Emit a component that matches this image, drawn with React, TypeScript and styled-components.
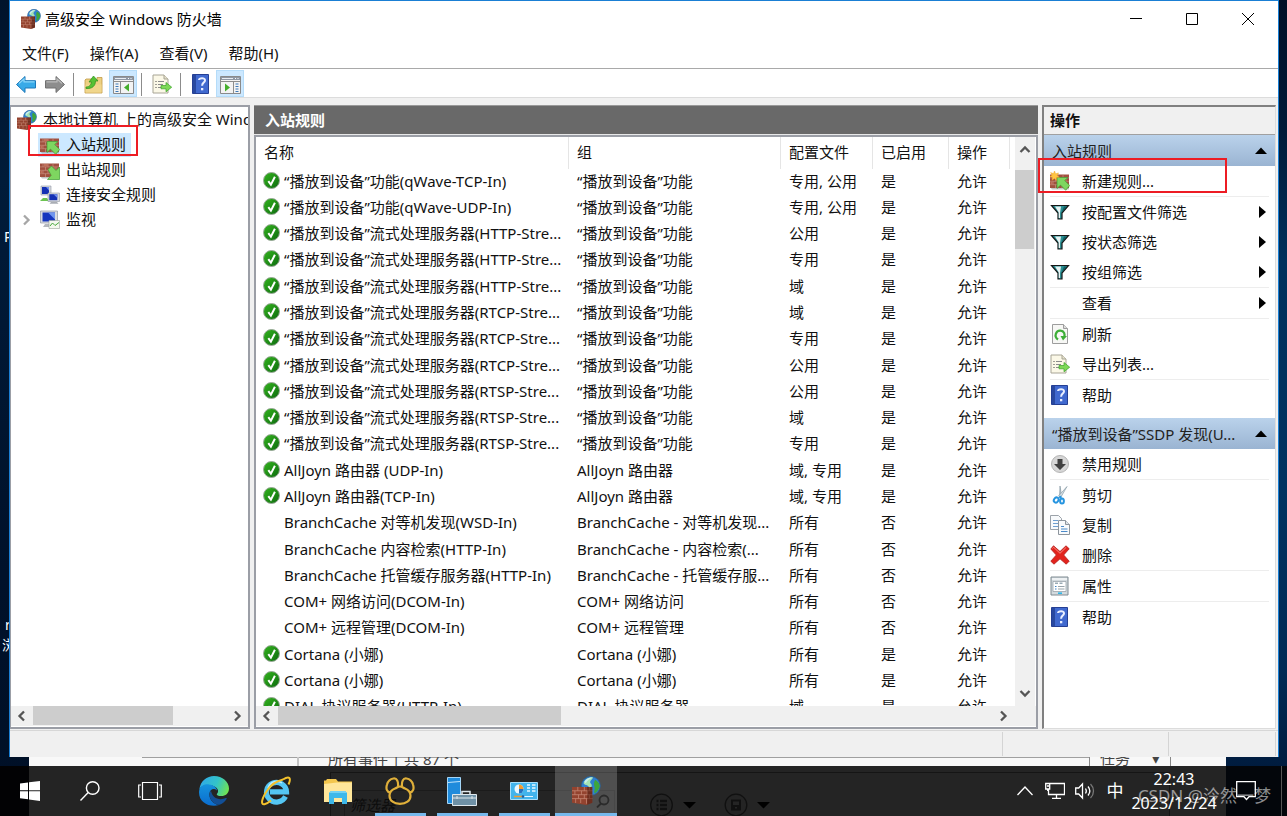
import React from "react";
import styled, { createGlobalStyle } from "styled-components";

const GlobalStyle = createGlobalStyle`
  *, *::before, *::after { box-sizing: border-box; }
  html, body { margin: 0; padding: 0; height: 100%; }
  body {
    font-family: "Noto Sans", "Noto Sans CJK SC", sans-serif;
    font-size: 15px;
    line-height: 20px;
    color: #111;
    overflow: hidden;
  }
  button { font: inherit; color: inherit; background: none; border: 0; padding: 0; margin: 0; text-align: left; }
  ul { list-style: none; margin: 0; padding: 0; }
  h1, h2 { font: inherit; margin: 0; }
  svg { display: block; flex: none; }
`;

/* ---------- layout ---------- */

const Desktop = styled.div`
  position: relative;
  height: 100vh;
  display: flex;
  flex-direction: column;
  background: linear-gradient(180deg, #001027 0, #001a38 16%, #00305c 32%, #003260 60%, #002a55 82%, #001c3f 94%) right / 62px 100% no-repeat,
    linear-gradient(180deg, #00132c 0, #001c3a 22%, #00112a 70%, #001027 100%);
`;

const DesktopLabel = styled.span<{ $top: number; $left: number }>`
  position: absolute;
  top: ${(p) => p.$top}px;
  left: ${(p) => p.$left}px;
  color: #fff;
  font-size: 14px;
`;

const Window = styled.main`
  position: relative;
  flex: 1;
  min-height: 0;
  margin: 0 8px 0 9px;
  display: flex;
  flex-direction: column;
  background: #f0f0f0;
  border: 1px solid #1a7fd4;
  border-bottom: 0;
`;

const TitleBar = styled.header`
  height: 36px;
  flex: none;
  display: flex;
  align-items: center;
  background: #fff;
  padding: 0 2px 0 11px;
  h1 { flex: 1; margin-left: 4px; color: #000; }
`;

const CaptionButton = styled.button`
  width: 56px;
  height: 36px;
  display: grid;
  place-items: center;
`;

const MenuBar = styled.nav`
  height: 32px;
  flex: none;
  display: flex;
  align-items: center;
  gap: 1px;
  padding-left: 2px;
  background: #fff;
  border-bottom: 1px solid #a9a9a9;
  button { padding: 0 10px; height: 28px; }
`;

const Toolbar = styled.div`
  height: 29px;
  flex: none;
  display: flex;
  gap: 1px;
  padding: 1px 0 0 2px;
  background: #fff;
  border-bottom: 1px solid #dcdcdc;
`;

const ToolButton = styled.button<{ $active?: boolean }>`
  width: 28px;
  height: 27px;
  display: grid;
  place-items: center;
  background: ${(p) => (p.$active ? "#cce8ff" : "transparent")};
  border: 1px solid ${(p) => (p.$active ? "#b5dcf9" : "transparent")};
`;

const ToolDivider = styled.span`
  width: 1px;
  margin: 3px 5px 1px 3px;
  background: #8c8c8c;
`;

const Panels = styled.div`
  flex: 1;
  min-height: 0;
  display: grid;
  grid-template-columns: 240px minmax(0, 1fr) 234px;
  gap: 4px;
  padding: 7px 2px 1px 0;
`;

const TreePanel = styled.nav`
  display: flex;
  flex-direction: column;
  min-height: 0;
  background: #fff;
  border: 2px solid #9b9ea6;
  border-left-width: 1px;
`;

const TreeList = styled.ul`
  flex: 1;
  min-height: 0;
`;

const TreeItem = styled.li<{ $level: number }>`
  position: relative;
  display: flex;
  align-items: center;
  height: 25px;
  padding-left: ${(p) => (p.$level ? 27 : 4)}px;
`;

const TreeButton = styled.button<{ $selected?: boolean }>`
  display: flex;
  align-items: center;
  gap: 6px;
  height: 24px;
  padding: 0 5px 0 2px;
  min-width: 0;
  overflow: hidden;
  white-space: nowrap;
  background: ${(p) => (p.$selected ? "#cce8ff" : "transparent")};
`;

const Label = styled.span`
  padding-bottom: 1px;
`;

const Expander = styled.span`
  position: absolute;
  left: 9px;
  top: 7px;
`;

const TreeMark = styled.span`
  position: absolute;
  left: 17px;
  top: -7px;
  width: 110px;
  height: 31px;
  border: 2px solid #ed1c24;
  pointer-events: none;
`;

const ActionMark = styled.span`
  position: absolute;
  left: -12px;
  right: 42px;
  top: -8px;
  height: 35px;
  border: 2px solid #ed1c24;
  pointer-events: none;
`;

const RulesPanel = styled.section`
  display: flex;
  flex-direction: column;
  min-width: 0;
  min-height: 0;
`;

const RulesTitle = styled.h2`
  height: 30px;
  flex: none;
  padding: 4px 11px;
  background: #696969;
  border-top: 1px solid #999;
  border-bottom: 1px solid #e8e8e8;
  color: #fff;
  font-weight: 700;
`;

const RulesBody = styled.div`
  flex: 1;
  min-height: 0;
  display: flex;
  flex-direction: column;
  background: #fff;
  border: 2px solid #9b9ea6;
`;

const RulesView = styled.div`
  flex: 1;
  min-height: 0;
  display: flex;
`;

const TableClip = styled.div`
  flex: 1;
  min-width: 0;
  overflow: hidden;
`;

const RuleTable = styled.table`
  width: 754px;
  height: 584px;
  table-layout: fixed;
  border-collapse: separate;
  border-spacing: 0;
  th, td {
    padding: 0 0 3px 8px;
    text-align: left;
    white-space: nowrap;
    overflow: hidden;
    font-weight: 400;
  }
  th { height: 32px; border-right: 1px solid #e5e5e5; }
  td:first-child { padding-left: 7px; }
`;

const RuleName = styled.span`
  display: flex;
  align-items: center;
  gap: 3px;
`;

const IconSlot = styled.span`
  width: 18px;
  flex: none;
`;

const ScrollTrack = styled.div<{ $vertical?: boolean; $inset?: boolean }>`
  flex: none;
  display: flex;
  flex-direction: ${(p) => (p.$vertical ? "column" : "row")};
  ${(p) => (p.$vertical ? "width: 20px;" : "height: 20px;")}
  margin: 0 ${(p) => (p.$vertical ? 1 : 0)}px ${(p) => (p.$vertical ? 0 : 1)}px 0;
  background: #f0f0f0;
  padding-right: ${(p) => (p.$inset ? 22 : 0)}px;
`;

const ScrollButton = styled.button<{ $vertical?: boolean }>`
  flex: none;
  width: ${(p) => (p.$vertical ? 20 : 22)}px;
  height: ${(p) => (p.$vertical ? 26 : 20)}px;
  display: grid;
  place-items: center;
`;

const ScrollRail = styled.div`
  flex: 1;
  min-height: 0;
  min-width: 0;
`;

const Thumb = styled.div<{ $length: number; $vertical?: boolean }>`
  background: #cdcdcd;
  width: ${(p) => (p.$vertical ? 19 : p.$length)}px;
  height: ${(p) => (p.$vertical ? p.$length : 19)}px;
  ${(p) => p.$vertical && "margin-top: 7px;"}
`;

const ActionPanel = styled.aside`
  display: flex;
  flex-direction: column;
  min-height: 0;
  background: #fff;
  border: 2px solid #808080;
  border-right: 1px solid #dcdcdc;
  border-bottom: 1px solid #dcdcdc;
`;

const PanelTitle = styled.h2`
  height: 28px;
  padding: 3px 6px;
  background: #f0f0f0;
  border-bottom: 1px solid #a0a0a0;
  font-weight: 700;
`;

const SectionHeader = styled.button`
  display: flex;
  align-items: center;
  justify-content: space-between;
  width: 100%;
  height: 31px;
  padding: 0 8px;
  background: linear-gradient(180deg, #bad2eb, #9ab4d2);
  color: #222;
`;

const ActionSection = styled.section`
  margin-bottom: 8px;
`;

const ActionItem = styled.li<{ $divided?: boolean }>`
  position: relative;
  margin: 0 6px;
  border-bottom: ${(p) => (p.$divided ? "1px solid #ededed" : "0")};
`;

const ActionButton = styled.button`
  display: flex;
  align-items: center;
  width: 100%;
  height: 30px;
  padding-right: 3px;
`;

const ActionIcon = styled.span`
  width: 20px;
  height: 20px;
  margin-right: 12px;
`;

const ActionText = styled.span`
  flex: 1;
`;

const StatusBar = styled.footer`
  height: 27px;
  flex: none;
  display: flex;
  border-top: 1px solid #d7d7d7;
  padding: 1px 2px 1px 0;
`;

const StatusCell = styled.span<{ $width?: number }>`
  flex: ${(p) => (p.$width ? `0 0 ${p.$width}px` : "1")};
  border-right: 1px solid #d4d4d4;
`;

/* The strip of the application that is open behind the window. */
const BackWindow = styled.div`
  position: relative;
  height: 9px;
  flex: none;
  display: flex;
  align-items: flex-end;
  overflow: hidden;
  margin: 0 61px 0 29px;
  background: #f8f8f8;
  color: #444;
`;

const BackPane = styled.span<{ $width: number }>`
  width: ${(p) => p.$width}px;
  height: 9px;
  flex: none;
  border-right: 2px solid #c4c4c4;
  background: linear-gradient(#a0a0a0, #a0a0a0) right top / 155px 1px no-repeat;
`;

const BackText = styled.span`
  flex: 1;
  height: 9px;
  padding-left: 29px;
  border-top: 1px solid #a0a0a0;
  line-height: 2px;
`;

const BackCombo = styled.span`
  width: 82px;
  height: 9px;
  margin-right: 55px;
  padding: 0 10px;
  display: flex;
  justify-content: space-between;
  border: solid #888;
  border-width: 0 1px;
  line-height: 2px;
`;

/* ---------- taskbar ---------- */

const Taskbar = styled.footer`
  position: relative;
  height: 50px;
  flex: none;
  display: flex;
  background: linear-gradient(90deg, #020204 29px, #242424 29px, #242424 calc(100% - 61px), #03060b calc(100% - 61px));
  color: #fff;
`;

const TaskGroup = styled.div`
  position: relative;
  display: flex;
  margin-right: 3px;
`;

const TaskButton = styled.button<{ $wide?: boolean; $active?: boolean }>`
  width: ${(p) => (p.$wide ? 62 : 60)}px;
  display: grid;
  place-items: center;
`;

const RunningButton = styled(TaskButton)`
  background: ${(p) => (p.$active ? "rgba(255,255,255,.2)" : "transparent")}
    linear-gradient(#76b9ed, #76b9ed) bottom / ${(p) => (p.$active ? "100%" : "51px")} 3px no-repeat;
`;

const Tray = styled.div`
  margin-left: auto;
  position: relative;
  display: flex;
  padding-right: 5px;
`;

const TrayButton = styled.button<{ $width?: number }>`
  width: ${(p) => p.$width ?? 30}px;
  display: grid;
  place-items: center;
  font-size: 17px;
`;

const Clock = styled.button`
  width: 96px;
  padding-right: 8px;
  text-align: center;
  font-size: 16px;
  line-height: 24px;
  time { display: block; }
`;

const ShowDesktop = styled.span`
  width: 1px;
  margin-left: 15px;
  background: #555;
`;

const Watermark = styled.span`
  position: absolute;
  right: 16px;
  top: 19px;
  font-size: 17px;
  line-height: 22px;
  white-space: nowrap;
  color: rgba(255, 255, 255, 0.55);
  pointer-events: none;
`;

const Ghost = styled.div`
  position: absolute;
  inset: 6px 117px 0 330px;
  border: 1px solid #151515;
  border-bottom: 0;
  pointer-events: none;
  color: #0c0c0c;
`;

const GhostFilter = styled.div`
  position: absolute;
  left: 13px;
  top: 17px;
  width: 271px;
  height: 30px;
  padding: 4px 5px;
  border: 1px solid #1b1b1b;
  border-bottom: 0;
  font-style: italic;
`;

const GhostTools = styled.div`
  position: absolute;
  left: 319px;
  top: 20px;
`;

/* ---------- icons ---------- */

const Globe = () => (
  <g>
    <circle cx="13" cy="6.800" r="6.500" fill="#2f7fd0" stroke="#2a6296" strokeWidth=".6" />
    <path d="M8 5C9 2 12 .6 14.500 1c-.4 1.600-1.800 1.600-2 3-.2 1.500 1.800 1.600 1 3.200-.6 1.200-2 .6-2.600-.4C10.300 6 9 6.500 8 5z" fill="#a5e3b4" />
    <path d="M16 2.500c2 1.200 3.200 2.800 3.200 4.800-.8 2.700-2.400 4.200-3.700 4.700-.6-1.600.5-2.700.1-4.200-.3-1.500-.9-3.200.4-5.300z" fill="#3da63c" />
    <path d="M8.500 4C10 1.500 12 .8 14 1c-1.500 1-3.500 2-4.500 4z" fill="#d3f0fb" opacity=".8" />
  </g>
);

const Wall = () => (
  <g>
    <path d="M0 7.500h14v11L10 20 0 18.500z" fill="#93432f" />
    <path d="M0 10.200h14M0 12.900h14M0 15.600h14M4 7.500v2.700M8.500 7.500v2.700M12 7.500v2.700M2 10.200v2.700M6.500 10.200v2.700M10.500 10.200v2.700M4.500 12.900v2.700M8.500 12.900v2.700M12 12.900v2.700M2.500 15.600v3M6 15.600v3M10 15.600v3.500" stroke="#c98c79" strokeWidth=".5" />
    <path d="M10.500 7.500H14v11l-3.500 1.300z" fill="#4e1c10" opacity=".55" />
  </g>
);

const FirewallIcon = ({ size = 20 }: { size?: number }) => (
  <svg width={size} height={size} viewBox="0 0 20 20">
    <Globe />
    <Wall />
  </svg>
);

const RuleIcon = ({ out, isNew }: { out?: boolean; isNew?: boolean }) => (
  <svg width="20" height="20" viewBox="0 0 20 20">
    <path d="M0 16h19v2.500H2z" fill="#7d7d7d" opacity=".45" />
    <path d="M0 3.500h19V17H0z" fill="#a1503f" />
    <path d="M0 6.900h19M0 10.300h19M0 13.700h19M3 3.500v3.400M8 3.500v3.400M13 3.500v3.400M5.500 6.900v3.400M10.500 6.900v3.400M16 6.900v3.400M3 10.300v3.400M8 10.300v3.400M5.500 13.700V17M12 13.700V17" stroke="#cf998a" strokeWidth=".6" />
    <path d="M4 4h4v2.500H4zM11 7.300h4.500v2.600H11zM.5 10.700h2v2.600h-2z" fill="#c0705c" />
    {out ? (
      <path d="M8 9.500l3.500-3.500 4.500 4.500L19.500 7v12.500H7.500l3.700-4.200z" fill="#7ed660" stroke="#3d9c33" strokeWidth=".7" />
    ) : (
      <path d="M7 6.500h11l-3.300 3 5 5-4 4.800-5.200-5.200L7 17.500z" fill="#7ed660" stroke="#3d9c33" strokeWidth=".7" />
    )}
    {isNew && (
      <path d="M4.500-.2l1.100 3 3-.9-1.500 2.600 2.400 1.800-3.100.3.200 3.100-2.100-2.200L2 9.300l.3-3L-.4 5.600l2.500-1.500L.6 1.600l2.900 1z" fill="#ffc543" stroke="#ed9d20" strokeWidth=".4" />
    )}
  </svg>
);

const ConnectionIcon = () => (
  <svg width="20" height="20" viewBox="0 0 20 20">
    <path d="M1 1h10v9H1z" fill="#d7d9dd" stroke="#9298a4" strokeWidth=".6" />
    <path d="M2 2h7v7H2z" fill="#1430b4" />
    <path d="M6 2h3v3.500z" fill="#6f8eed" />
    <path d="M0 16l3-3h4l2 3z" fill="#6cc451" />
    <path d="M8 8h11.500v8.500H8z" fill="#d7d9dd" stroke="#9298a4" strokeWidth=".6" />
    <path d="M9.300 9.200h8v6h-8z" fill="#1430b4" />
    <path d="M13.500 9.200h3.800V13z" fill="#6f8eed" />
    <path d="M11 17h6l1.500 1.800H9.500z" fill="#a9adb4" />
  </svg>
);

const MonitorIcon = () => (
  <svg width="20" height="20" viewBox="0 0 20 20">
    <path d="M.5 1h17v12H.5z" fill="#d9dbe0" stroke="#9298a4" strokeWidth=".7" />
    <path d="M2.500 2.500h12.500v9H2.500z" fill="#1636be" />
    <path d="M8 2.500h7v7z" fill="#6f95ee" />
    <path d="M5 14h7l1 3H3z" fill="#b5b8be" />
    <path d="M9 10.500h10.500v8H9z" fill="#f4f8ef" stroke="#9aa39a" strokeWidth=".6" />
    <path d="M10 16l2.500-3 2.500 2.500 4-3" fill="none" stroke="#48a83c" strokeWidth="1" />
  </svg>
);

const ArrowIcon = ({ back }: { back?: boolean }) => (
  <svg width="20" height="20" viewBox="0 0 20 20">
    <path
      d={back ? "M.5 10.500l8.500-8v4.200h10.500v7.300H9v4.500z" : "M19.500 10.500l-8.500-8v4.200H.5v7.300H11v4.500z"}
      fill={back ? "#38aae8" : "#8d8d8d"}
      stroke={back ? "#1d78b9" : "#707070"}
      strokeLinejoin="round"
    />
    <path d={back ? "M3 9.500l5-4.500v2.800h10.500" : "M1.500 7.800H12V5l5 4.500"} fill="none" stroke={back ? "#8bd5f8" : "#bcbcbc"} strokeWidth="1.200" />
  </svg>
);

const FolderUpIcon = () => (
  <svg width="20" height="20" viewBox="0 0 20 20">
    <path d="M1 6l1-1h6l2 1h3V3.500h5V19H1z" fill="#ecd082" stroke="#c19a45" strokeWidth=".8" />
    <path d="M1.500 10.500h16v8h-16z" fill="#f0d68c" />
    <path d="M2 13c3.500 0 5-2 5.500-5H5l4.500-6L14 7h-2.500c0 5-3.500 8-9.500 7.500z" fill="#55c134" stroke="#2e8f1d" strokeWidth=".7" />
  </svg>
);

const PaneIcon = ({ right }: { right?: boolean }) => (
  <svg width="21" height="20" viewBox="0 0 21 20">
    <path d="M.5 2.500h20v17H.5z" fill="#f3f3f3" stroke="#8a8a8a" />
    <path d="M1 3h19v3H1z" fill="#8f98a5" />
    <path d="M2 4.500h11" stroke="#e9edf2" />
    <path d="M15 4h1v1h-1zM17.500 4h1v1h-1z" fill="#fff" />
    <path d="M1 7.500h19" stroke="#8c8c8c" />
    <path d={right ? "M13.500 8v11" : "M7.500 8v11"} stroke="#8c8c8c" />
    <path d={right ? "M15.500 10h3M15.500 12.500h3M15.500 15h3M15.500 17.500h3" : "M2.500 10h3M2.500 12.500h3M2.500 15h3M2.500 17.500h3"} stroke="#3c79b8" />
    <path d={right ? "M5 9.500l5 4-5 4z" : "M16 9.500l-5 4 5 4z"} fill="#44ae2b" />
  </svg>
);

const ExportIcon = () => (
  <svg width="20" height="20" viewBox="0 0 20 20">
    <path d="M1 1h11l4 4v14H1z" fill="#fbf8e7" stroke="#a7a495" />
    <path d="M12 1v4h4" fill="#e6e2cc" stroke="#a7a495" />
    <path d="M6 7.500h6M6 10.500h5M6 13.500h4" stroke="#8b8b8b" />
    <path d="M3.500 7.500h1M3.500 10.500h1M3.500 13.500h1" stroke="#444" />
    <path d="M9 11.500h5v-3l5.700 4.700-5.700 4.600v-3H9z" fill="#7ed957" stroke="#37a226" strokeWidth=".7" />
  </svg>
);

const HelpIcon = () => (
  <svg width="20" height="20" viewBox="0 0 20 20">
    <path d="M1.500.5h16v19h-16z" fill="#4069cf" stroke="#253f94" />
    <path d="M2 1h3v18H2z" fill="#2848a0" />
    <path d="M8 6c.3-2.400 6.200-2.600 6 .4-.1 2.200-2.900 2.300-2.900 5.300" fill="none" stroke="#e9efff" strokeWidth="2" />
    <path d="M10 14h2.300v2.300H10z" fill="#e9efff" />
  </svg>
);

const CheckIcon = () => (
  <svg width="18" height="18" viewBox="0 0 18 18">
    <defs>
      <linearGradient id="tick" x1="0" y1="0" x2="1" y2="1">
        <stop offset="0" stopColor="#35b51f" />
        <stop offset="1" stopColor="#0c6a0e" />
      </linearGradient>
    </defs>
    <circle cx="8.500" cy="8.500" r="8" fill="url(#tick)" stroke="#9aa899" />
    <path d="M5.300 9.200l2.600 3.500 4-8" fill="none" stroke="#fff" strokeWidth="2" />
  </svg>
);

const FunnelIcon = () => (
  <svg width="20" height="20" viewBox="0 0 20 20">
    <path d="M1.500 3.500h17l-6.500 7.500v6h-4v-6z" fill="#2b8f92" stroke="#161616" strokeWidth="1.200" />
    <path d="M5 4.500h6l-1 6.500v5H8.700v-5.400z" fill="#e8f3f3" />
    <path d="M14 4.500h3l-5.500 6z" fill="#0e5f63" />
  </svg>
);

const RefreshIcon = () => (
  <svg width="20" height="20" viewBox="0 0 20 20">
    <path d="M2.500.5h11l4 4v15h-15z" fill="#f7f7f5" stroke="#9d9d9d" />
    <path d="M13.500.5v4h4" fill="#ddd" stroke="#9d9d9d" />
    <path d="M8 15.500c-4.500-3-2-9 2.300-8.800 4 .2 5 3.800 3.800 6.300" fill="none" stroke="#3eae38" strokeWidth="2.200" />
    <path d="M10.500 12h6.500l-4 4.600z" fill="#3eae38" />
  </svg>
);

const DisableIcon = () => (
  <svg width="20" height="20" viewBox="0 0 20 20">
    <circle cx="10" cy="10" r="8.500" fill="#d6d6d6" stroke="#b5b5b5" />
    <path d="M7.500 5h5v5H16l-6 6-6-6h3.500z" fill="#404040" />
  </svg>
);

const CutIcon = () => (
  <svg width="20" height="20" viewBox="0 0 20 20">
    <path d="M10 1l1.500 9-2 2z" fill="#b9c6cf" stroke="#7a909c" strokeWidth=".6" />
    <path d="M17 1.500L11 12 8.500 11z" fill="#d7e0e6" stroke="#7a909c" strokeWidth=".6" />
    <ellipse cx="6.200" cy="15" rx="2.200" ry="2.700" transform="rotate(35 6.200 15)" fill="none" stroke="#2795e0" strokeWidth="2" />
    <ellipse cx="12" cy="16" rx="1.900" ry="2.500" fill="none" stroke="#2795e0" strokeWidth="2" />
    <path d="M8 12.500l3-2 1 3z" fill="#2795e0" />
  </svg>
);

const CopyIcon = () => (
  <svg width="20" height="20" viewBox="0 0 20 20">
    <path d="M.5.5h8l3 3v11H.5z" fill="#f8fafc" stroke="#9ca3aa" />
    <path d="M3 5.500h5M3 8.500h5M3 11.500h5" stroke="#6f9fd0" />
    <path d="M8.500 5.500h7l4 4v10h-11z" fill="#f8fafc" stroke="#8d959d" />
    <path d="M15.500 5.500v4h4" fill="#dde3e9" stroke="#8d959d" />
    <path d="M11 11.500h3M11 14h6.500M11 16.500h6.500" stroke="#4a8ac9" />
  </svg>
);

const DeleteIcon = () => (
  <svg width="20" height="20" viewBox="0 0 20 20">
    <path d="M3.500.8L10 6.500 16 .8l3.200 3-5.500 6.200 5.500 6.200-3 3L10 13.800 4 19.200l-3.200-3L6.300 10 .8 4z" fill="#e2231d" stroke="#b3201c" strokeWidth=".8" strokeLinejoin="round" />
    <path d="M2.500 3.500l1.200-1.200L10 8.300l6.200-6" fill="none" stroke="#f98a80" />
  </svg>
);

const PropertiesIcon = () => (
  <svg width="20" height="20" viewBox="0 0 20 20">
    <path d="M1 1h17v18H1z" fill="#d3dade" stroke="#7f8a91" />
    <path d="M2 2h15v2H2z" fill="#eef1f3" />
    <path d="M3 5.500h13v10H3z" fill="#fff" stroke="#9aa5ac" strokeWidth=".8" />
    <path d="M5 6.500h3v1.500H5zM9.500 6.500h3v1.500h-3z" fill="#9aabb6" />
    <path d="M5 10.500h1.500M5 13h1.500" stroke="#3c82c4" />
    <path d="M8 10.500h6.500M8 13h6.500" stroke="#98a4ab" />
    <path d="M8 17.200h4" stroke="#27b5e8" strokeWidth="1.500" />
  </svg>
);

const Triangle = ({ up }: { up?: boolean }) => (
  <svg width={up ? 12 : 7} height={up ? 7 : 12} viewBox={up ? "0 0 12 7" : "0 0 7 12"}>
    <path d={up ? "M0 7l6-6.500L12 7z" : "M0 0l7 6-7 6z"} fill="#000" />
  </svg>
);

const Caret = ({ turn = 0, color = "#555" }: { turn?: number; color?: string }) => (
  <svg width="12" height="12" viewBox="0 0 12 12">
    <path d="M1.500 8L6 3.500 10.500 8" transform={`rotate(${turn} 6 6)`} fill="none" stroke={color} strokeWidth="2.300" />
  </svg>
);

const StartIcon = () => (
  <svg width="20" height="20" viewBox="0 0 20 20">
    <path d="M0 2.500l8-1v7.700H0zM9 1.300L20 0v9.200H9zM0 10.200h8v8L0 17.200zM9 10.200h11V20L9 18.400z" fill="#fff" />
  </svg>
);

const SearchIcon = () => (
  <svg width="20" height="20" viewBox="0 0 20 20" fill="none" stroke="#fff" strokeWidth="1.400">
    <circle cx="12.700" cy="7" r="6.300" />
    <path d="M8.200 11.500L.5 19.500" />
  </svg>
);

const TaskViewIcon = () => (
  <svg width="24" height="20" viewBox="0 0 24 20" fill="none" stroke="#fff" strokeWidth="1.200">
    <path d="M4.500 1.500h15v17h-15zM3 4H.7v12H3M21 4h2.300v12H21" />
  </svg>
);

const EdgeIcon = () => (
  <svg width="30" height="30" viewBox="0 0 30 30">
    <defs>
      <linearGradient id="edgeTop" x1="0" y1=".3" x2="1" y2=".6">
        <stop offset="0" stopColor="#2fa9e8" />
        <stop offset=".55" stopColor="#33c3c9" />
        <stop offset="1" stopColor="#6fe354" />
      </linearGradient>
      <linearGradient id="edgeLow" x1="0" y1="0" x2="0" y2="1">
        <stop offset="0" stopColor="#1593dd" />
        <stop offset="1" stopColor="#0b6cce" />
      </linearGradient>
    </defs>
    <path d="M.4 13C1.500 5 8 0 15 0c8.500 0 15 6 15 12.500 0 5-3.700 7.500-7.500 7.500-4 0-5.500-1.300-4.300-2.600 1.800-2 .8-5.400-2.700-7C10 8 3 9 .4 13z" fill="url(#edgeTop)" />
    <path d="M.2 14.500C1 9.500 6 8 10 8.400c4 .3 7.500 2.600 8 6-3.500-3-7.300-.5-7.600 3.300-.4 5.500 4 10.500 9.600 11.300C10 32-1.500 25.500.2 14.500z" fill="url(#edgeLow)" />
    <path d="M12 14.500c-4.500 6.500 2.500 14.500 8.500 14.300 3.200-1 6-3.500 7.200-6 .3-.7-.2-1-.8-.7C20 25 13 22 12 14.500z" fill="#124f96" />
  </svg>
);

const ExplorerBrowserIcon = () => (
  <svg width="30" height="30" viewBox="0 0 30 30" fill="none">
    <path d="M24.500 20.500A10 9.800 0 1 1 25.500 15.800H9" stroke="#54c6f3" strokeWidth="5.200" />
    <path d="M7 12c2-6 9-9 14-5" stroke="#b9ecff" strokeWidth="1.500" />
    <path d="M22 3.500c6.500-4 8.500-1.500 5.500 5M6.500 14C.8 22-.8 29 3.500 28.300c2-.4 4.500-2 6.500-3.700M6.500 14C11 7.500 16 5 22 3.500" stroke="#f4c22c" strokeWidth="2" />
  </svg>
);

const FolderIcon = () => (
  <svg width="28" height="25" viewBox="0 0 28 25">
    <path d="M0 1.500h2L3 0h9l2 2.500h14V23H0z" fill="#f3c64d" />
    <path d="M0 5l13-1.500h15V23H0z" fill="#ffe69a" />
    <path d="M5 25V14l2-2h14l2 2v11h-5v-6h-8v6z" fill="#3db8ea" />
    <path d="M5 14l2-2h14l2 2z" fill="#73d2f4" />
  </svg>
);

const NavicatIcon = () => (
  <svg width="30" height="28" viewBox="0 0 30 28" fill="none" stroke="#e0b03a" strokeWidth="2.200">
    <path d="M15 9.500c2 0 3 1.300 5 2 3 1.200 5.500 3.800 5.500 7.300 0 5-4.500 8-10.500 8s-10.500-3-10.500-8c0-3.500 2.500-6.100 5.500-7.300 2-.7 3-2 5-2z" />
    <path d="M5.500 15.500C1.500 15 .8 11.500 2 7.500 2.800 4.500 5.500 2 8.500 1.500c3.500-.5 5 3 4.500 8M24.500 15.500c4-.5 4.700-4 3.500-8-.8-3-3.500-5.500-6.500-6-3.500-.5-5 3-4.500 8" />
  </svg>
);

const ServerIcon = () => (
  <svg width="30" height="29" viewBox="0 0 30 29">
    <path d="M.5.5h13v26H.5z" fill="#1f8bdc" stroke="#a4d5f6" />
    <path d="M1 5l12-1v1L1 6z" fill="#bfe3fb" />
    <path d="M15 17v-2.500h8V17" fill="none" stroke="#dfe8ed" strokeWidth="1.500" />
    <path d="M5.500 17.500h24v11h-24z" fill="#6f91a6" stroke="#dfe8ed" />
    <path d="M6 21h23M10 19v3M25 19v3" stroke="#dfe8ed" />
  </svg>
);

const ControlPanelIcon = () => (
  <svg width="28" height="18" viewBox="0 0 28 18">
    <path d="M.5.500h27v17H.500z" fill="#42b4ec" stroke="#a6defa" />
    <circle cx="9" cy="7" r="4.500" fill="#e9f7ff" />
    <path d="M9 7V2.500A4.500 4.500 0 0 1 13.500 7z" fill="#f49b2c" />
    <path d="M9 7h4.500A4.500 4.500 0 0 1 9 11.500z" fill="#2670be" />
    <path d="M17 3h3M17 6h3M17 9h3M22 3h3.500M22 6h3.500M22 9h3.500" stroke="#e9f7ff" strokeWidth="1.500" />
    <path d="M4 14.500h9" stroke="#f49b2c" strokeWidth="1.500" />
    <path d="M14 14.500h9" stroke="#e9f7ff" />
    <circle cx="13" cy="14.500" r="1.300" fill="#1e5c9d" />
  </svg>
);

const TrayIcon = ({ name }: { name: "up" | "network" | "volume" | "notice" }) => (
  <svg width="20" height="20" viewBox="0 0 20 20" fill="none" stroke="#fff" strokeWidth="1.300">
    {name === "up" && <path d="M2.500 14L10 6l7.500 8" />}
    {name === "network" && <path d="M5 2.500h14.500v11H3.500V8.500M.7 2.500h4v5.500h-4zM2.700 8v2M2 5h2M7 17.300h9M11.500 13.500v3.500" />}
    {name === "volume" && (
      <>
        <path d="M.7 7h3L7.500 3v14l-3.800-4h-3zM10.500 7.500c1 1.500 1 3.500 0 5M13 5.500c2.200 2.700 2.200 6.300 0 9" />
        <path d="M15.500 3c4 4 4 10 0 14" stroke="#777" />
      </>
    )}
    {name === "notice" && <path d="M.7.700h18.600v15H13L10.500 18.500 8 15.700H.7z" />}
  </svg>
);

const GhostToolsIcon = () => (
  <svg width="124" height="24" viewBox="0 0 124 24" fill="none" stroke="#101010" strokeWidth="1.300">
    <circle cx="11.500" cy="12" r="10.800" />
    <path d="M6.500 8h2M10 8h7M6.500 12h2M10 12h7M6.500 16h2M10 16h7" strokeWidth="2.400" />
    <path d="M33 9h13l-6.500 6.500zM107 9h13l-6.500 6.500z" fill="#000" stroke="none" />
    <circle cx="86" cy="12" r="10.800" />
    <path d="M82 7.500h8v9h-8zM84 13h4v3.500h-4z" strokeWidth="2" />
  </svg>
);

/* ---------- data ---------- */

type Rule = [name: string, group: string, profile: string, enabled: boolean];

const CAST = "“播放到设备”功能";
const stream = (kind: string, profile: string): Rule => [`“播放到设备”流式处理服务器(${kind}-Stre...`, CAST, profile, true];

const RULES: Rule[] = [
  ["“播放到设备”功能(qWave-TCP-In)", CAST, "专用, 公用", true],
  ["“播放到设备”功能(qWave-UDP-In)", CAST, "专用, 公用", true],
  stream("HTTP", "公用"),
  stream("HTTP", "专用"),
  stream("HTTP", "域"),
  stream("RTCP", "域"),
  stream("RTCP", "专用"),
  stream("RTCP", "公用"),
  stream("RTSP", "公用"),
  stream("RTSP", "域"),
  stream("RTSP", "专用"),
  ["AllJoyn 路由器 (UDP-In)", "AllJoyn 路由器", "域, 专用", true],
  ["AllJoyn 路由器(TCP-In)", "AllJoyn 路由器", "域, 专用", true],
  ["BranchCache 对等机发现(WSD-In)", "BranchCache - 对等机发现...", "所有", false],
  ["BranchCache 内容检索(HTTP-In)", "BranchCache - 内容检索(...", "所有", false],
  ["BranchCache 托管缓存服务器(HTTP-In)", "BranchCache - 托管缓存服...", "所有", false],
  ["COM+ 网络访问(DCOM-In)", "COM+ 网络访问", "所有", false],
  ["COM+ 远程管理(DCOM-In)", "COM+ 远程管理", "所有", false],
  ["Cortana (小娜)", "Cortana (小娜)", "所有", true],
  ["Cortana (小娜)", "Cortana (小娜)", "所有", true],
  ["DIAL 协议服务器(HTTP-In)", "DIAL 协议服务器", "域", true],
];

type Action = { label: string; icon?: React.ReactNode; submenu?: boolean; divided?: boolean; marked?: boolean };

const SECTIONS: { title: string; items: Action[] }[] = [
  {
    title: "入站规则",
    items: [
      { label: "新建规则...", icon: <RuleIcon isNew />, divided: true, marked: true },
      { label: "按配置文件筛选", icon: <FunnelIcon />, submenu: true },
      { label: "按状态筛选", icon: <FunnelIcon />, submenu: true },
      { label: "按组筛选", icon: <FunnelIcon />, submenu: true, divided: true },
      { label: "查看", submenu: true, divided: true },
      { label: "刷新", icon: <RefreshIcon /> },
      { label: "导出列表...", icon: <ExportIcon />, divided: true },
      { label: "帮助", icon: <HelpIcon /> },
    ],
  },
  {
    title: "“播放到设备”SSDP 发现(U...",
    items: [
      { label: "禁用规则", icon: <DisableIcon />, divided: true },
      { label: "剪切", icon: <CutIcon /> },
      { label: "复制", icon: <CopyIcon /> },
      { label: "删除", icon: <DeleteIcon />, divided: true },
      { label: "属性", icon: <PropertiesIcon />, divided: true },
      { label: "帮助", icon: <HelpIcon /> },
    ],
  },
];

const TREE: { label: string; icon: React.ReactNode; level: number; selected?: boolean; expandable?: boolean }[] = [
  { label: "本地计算机 上的高级安全 Windows 防火墙", icon: <FirewallIcon />, level: 0 },
  { label: "入站规则", icon: <RuleIcon />, level: 1, selected: true },
  { label: "出站规则", icon: <RuleIcon out />, level: 1 },
  { label: "连接安全规则", icon: <ConnectionIcon />, level: 1 },
  { label: "监视", icon: <MonitorIcon />, level: 1, expandable: true },
];

/* ---------- page ---------- */

export default function App() {
  return (
    <>
      <GlobalStyle />
      <Desktop>
        <DesktopLabel $top={227} $left={4}>P</DesktopLabel>
        <DesktopLabel $top={615} $left={5}>r</DesktopLabel>
        <DesktopLabel $top={635} $left={2}>浏</DesktopLabel>

        <Window>
          <TitleBar>
            <FirewallIcon />
            <h1>高级安全 Windows 防火墙</h1>
            <CaptionButton aria-label="最小化">
              <svg width="12" height="12" viewBox="0 0 12 12"><path d="M0 5.500h12" stroke="#000" /></svg>
            </CaptionButton>
            <CaptionButton aria-label="最大化">
              <svg width="12" height="12" viewBox="0 0 12 12"><path d="M.5.500h11v11H.500z" fill="none" stroke="#000" /></svg>
            </CaptionButton>
            <CaptionButton aria-label="关闭">
              <svg width="12" height="12" viewBox="0 0 12 12"><path d="M0 0l12 12M12 0L0 12" stroke="#000" /></svg>
            </CaptionButton>
          </TitleBar>

          <MenuBar>
            {["文件(F)", "操作(A)", "查看(V)", "帮助(H)"].map((m) => (
              <button key={m}>{m}</button>
            ))}
          </MenuBar>

          <Toolbar>
            <ToolButton aria-label="后退"><ArrowIcon back /></ToolButton>
            <ToolButton aria-label="前进"><ArrowIcon /></ToolButton>
            <ToolDivider />
            <ToolButton aria-label="上一级"><FolderUpIcon /></ToolButton>
            <ToolButton $active aria-label="控制台树"><PaneIcon /></ToolButton>
            <ToolDivider />
            <ToolButton aria-label="导出列表"><ExportIcon /></ToolButton>
            <ToolDivider />
            <ToolButton aria-label="帮助"><HelpIcon /></ToolButton>
            <ToolButton $active aria-label="操作窗格"><PaneIcon right /></ToolButton>
          </Toolbar>

          <Panels>
            <TreePanel>
              <TreeList>
                {TREE.map((t) => (
                  <TreeItem key={t.label} $level={t.level}>
                    {t.expandable && <Expander><Caret turn={90} color="#a6a6a6" /></Expander>}
                    <TreeButton $selected={t.selected}>
                      {t.icon}
                      <Label>{t.label}</Label>
                    </TreeButton>
                    {t.selected && <TreeMark />}
                  </TreeItem>
                ))}
              </TreeList>
              <ScrollTrack>
                <ScrollButton aria-label="向左"><Caret turn={-90} /></ScrollButton>
                <ScrollRail><Thumb $length={140} /></ScrollRail>
                <ScrollButton aria-label="向右"><Caret turn={90} /></ScrollButton>
              </ScrollTrack>
            </TreePanel>

            <RulesPanel>
              <RulesTitle>入站规则</RulesTitle>
              <RulesBody>
                <RulesView>
                  <TableClip>
                    <RuleTable>
                      <colgroup>
                        <col style={{ width: 313 }} />
                        <col style={{ width: 212 }} />
                        <col style={{ width: 92 }} />
                        <col style={{ width: 76 }} />
                        <col style={{ width: 61 }} />
                      </colgroup>
                      <thead>
                        <tr>
                          {["名称", "组", "配置文件", "已启用", "操作"].map((h) => (
                            <th key={h} scope="col">{h}</th>
                          ))}
                        </tr>
                      </thead>
                      <tbody>
                        {RULES.map(([name, group, profile, enabled], i) => (
                          <tr key={i}>
                            <td>
                              <RuleName>
                                <IconSlot>{enabled && <CheckIcon />}</IconSlot>
                                {name}
                              </RuleName>
                            </td>
                            <td>{group}</td>
                            <td>{profile}</td>
                            <td>{enabled ? "是" : "否"}</td>
                            <td>允许</td>
                          </tr>
                        ))}
                      </tbody>
                    </RuleTable>
                  </TableClip>
                  <ScrollTrack $vertical>
                    <ScrollButton $vertical aria-label="向上"><Caret /></ScrollButton>
                    <ScrollRail><Thumb $vertical $length={79} /></ScrollRail>
                    <ScrollButton $vertical aria-label="向下"><Caret turn={180} /></ScrollButton>
                  </ScrollTrack>
                </RulesView>
                <ScrollTrack $inset>
                  <ScrollButton aria-label="向左"><Caret turn={-90} /></ScrollButton>
                  <ScrollRail><Thumb $length={283} /></ScrollRail>
                  <ScrollButton aria-label="向右"><Caret turn={90} /></ScrollButton>
                </ScrollTrack>
              </RulesBody>
            </RulesPanel>

            <ActionPanel>
              <PanelTitle>操作</PanelTitle>
              {SECTIONS.map((s) => (
                <ActionSection key={s.title}>
                  <SectionHeader>{s.title}<Triangle up /></SectionHeader>
                  <ul>
                    {s.items.map((a) => (
                      <ActionItem key={a.label} $divided={a.divided}>
                        <ActionButton>
                          <ActionIcon>{a.icon}</ActionIcon>
                          <ActionText>{a.label}</ActionText>
                          {a.submenu && <Triangle />}
                        </ActionButton>
                        {a.marked && <ActionMark />}
                      </ActionItem>
                    ))}
                  </ul>
                </ActionSection>
              ))}
            </ActionPanel>
          </Panels>

          <StatusBar>
            <StatusCell />
            <StatusCell $width={166} />
            <StatusCell $width={107} />
          </StatusBar>
        </Window>

        <BackWindow>
          <BackPane $width={270} />
          <BackText>所有事件 | 共 87 个</BackText>
          <BackCombo>任务<span>▾</span></BackCombo>
        </BackWindow>

        <Taskbar>
          <Ghost>
            <GhostFilter>筛选器</GhostFilter>
            <GhostTools><GhostToolsIcon /></GhostTools>
          </Ghost>
          <TaskGroup>
            <TaskButton aria-label="开始"><StartIcon /></TaskButton>
            <TaskButton aria-label="搜索"><SearchIcon /></TaskButton>
            <TaskButton aria-label="任务视图"><TaskViewIcon /></TaskButton>
          </TaskGroup>
          <TaskGroup>
            <TaskButton $wide aria-label="Edge"><EdgeIcon /></TaskButton>
            <TaskButton $wide aria-label="Internet Explorer"><ExplorerBrowserIcon /></TaskButton>
            <TaskButton $wide aria-label="文件资源管理器"><FolderIcon /></TaskButton>
            <RunningButton $wide aria-label="Navicat"><NavicatIcon /></RunningButton>
            <RunningButton $wide aria-label="服务器管理器"><ServerIcon /></RunningButton>
            <RunningButton $wide aria-label="控制面板"><ControlPanelIcon /></RunningButton>
            <RunningButton $wide $active aria-label="防火墙">
              <svg width="50" height="34" viewBox="0 0 50 34">
                <g transform="translate(11 2) scale(1.450)"><Globe /><Wall /></g>
                <g fill="none" stroke="#2b2b2b" strokeWidth="1.800">
                  <circle cx="43" cy="26" r="4.500" />
                  <path d="M40 29.500l-4 4" />
                </g>
              </svg>
            </RunningButton>
          </TaskGroup>
          <Tray>
            <TrayButton aria-label="显示隐藏的图标"><TrayIcon name="up" /></TrayButton>
            <TrayButton aria-label="网络"><TrayIcon name="network" /></TrayButton>
            <TrayButton aria-label="音量"><TrayIcon name="volume" /></TrayButton>
            <TrayButton>中</TrayButton>
            <Clock>
              <time>22:43</time>
              <time>2023/12/24</time>
            </Clock>
            <TrayButton $width={40} aria-label="通知"><TrayIcon name="notice" /></TrayButton>
            <ShowDesktop />
          </Tray>
          <Watermark>CSDN @泠然一梦</Watermark>
        </Taskbar>
      </Desktop>
    </>
  );
}
